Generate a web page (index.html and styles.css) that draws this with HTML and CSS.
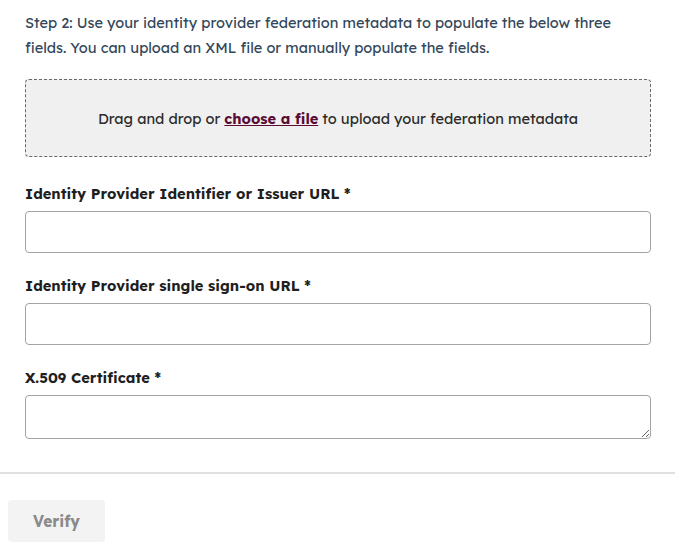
FILE: index.html
```html
<!DOCTYPE html>
<html>
<head>
    <meta charset="UTF-8">
    <meta name="viewport" content="width=device-width, initial-scale=1.0">
    <link rel="stylesheet" href="styles.css">
</head>
<body>
    <div class="container">
        <p class="intro">Step 2: Use your identity provider federation metadata to populate the below three fields. You can upload an XML file or manually populate the fields.</p>

        <div class="dropzone">
            Drag and drop or <a href="#" class="file-link">choose a file</a> to upload your federation metadata
        </div>

        <form action="/verify" method="post">
            <div class="form-group">
                <label for="issuer">Identity Provider Identifier or Issuer URL *</label>
                <input type="text" id="issuer" name="issuer" required>
            </div>
            <div class="form-group">
                <label for="ssourl">Identity Provider single sign-on URL *</label>
                <input type="text" id="ssourl" name="ssourl" required>
            </div>
            <div class="form-group last">
                <label for="certificate">X.509 Certificate *</label>
                <textarea id="certificate" name="certificate" rows="1" required></textarea>
            </div>
        </form>
    </div>

    <div class="footer">
        <button type="submit" class="verify-btn" disabled>Verify</button>
    </div>
</body>
</html>
```

FILE: styles.css
```css
* {
    box-sizing: border-box;
}

body {
    font-family: "Lexend Deca", "Open Sans", sans-serif;
    color: #33475b;
    background-color: #fff;
    margin: 0;
}

.container {
    padding: 10px 24px 0 25px;
}

.intro {
    font-size: 14.55px;
    line-height: 25px;
    margin: 0 0 19px;
}

.dropzone {
    background-color: #f0f0f0;
    border: 1px dashed #6a6a6a;
    border-radius: 4px;
    height: 78px;
    display: flex;
    align-items: center;
    justify-content: center;
    font-size: 14.6px;
    color: #2b2b2b;
    margin-bottom: 27px;
}

.file-link {
    color: #5b0c34;
    font-weight: bold;
    text-decoration: underline;
    margin: 0 4px;
}

.form-group {
    margin-bottom: 23px;
}

.form-group.last {
    margin-bottom: 0;
}

label {
    display: block;
    font-weight: bold;
    font-size: 14.7px;
    color: #1f1f1f;
    line-height: 20px;
    margin-bottom: 7px;
}

input[type="text"],
textarea {
    display: block;
    width: 100%;
    height: 42px;
    padding: 10px 12px;
    border: 1px solid #a3a3a3;
    border-radius: 4px;
    font-size: 16px;
    font-family: inherit;
}

textarea {
    height: 44px;
    resize: vertical;
}

.footer {
    border-top: 2px solid #e0e0e0;
    margin-top: 33px;
    padding: 26px 8px 4px;
}

.verify-btn {
    background-color: #f3f3f3;
    color: #8a8a8a;
    border: none;
    border-radius: 4px;
    width: 97px;
    height: 42px;
    font-size: 15.5px;
    font-weight: bold;
    font-family: inherit;
}
```
